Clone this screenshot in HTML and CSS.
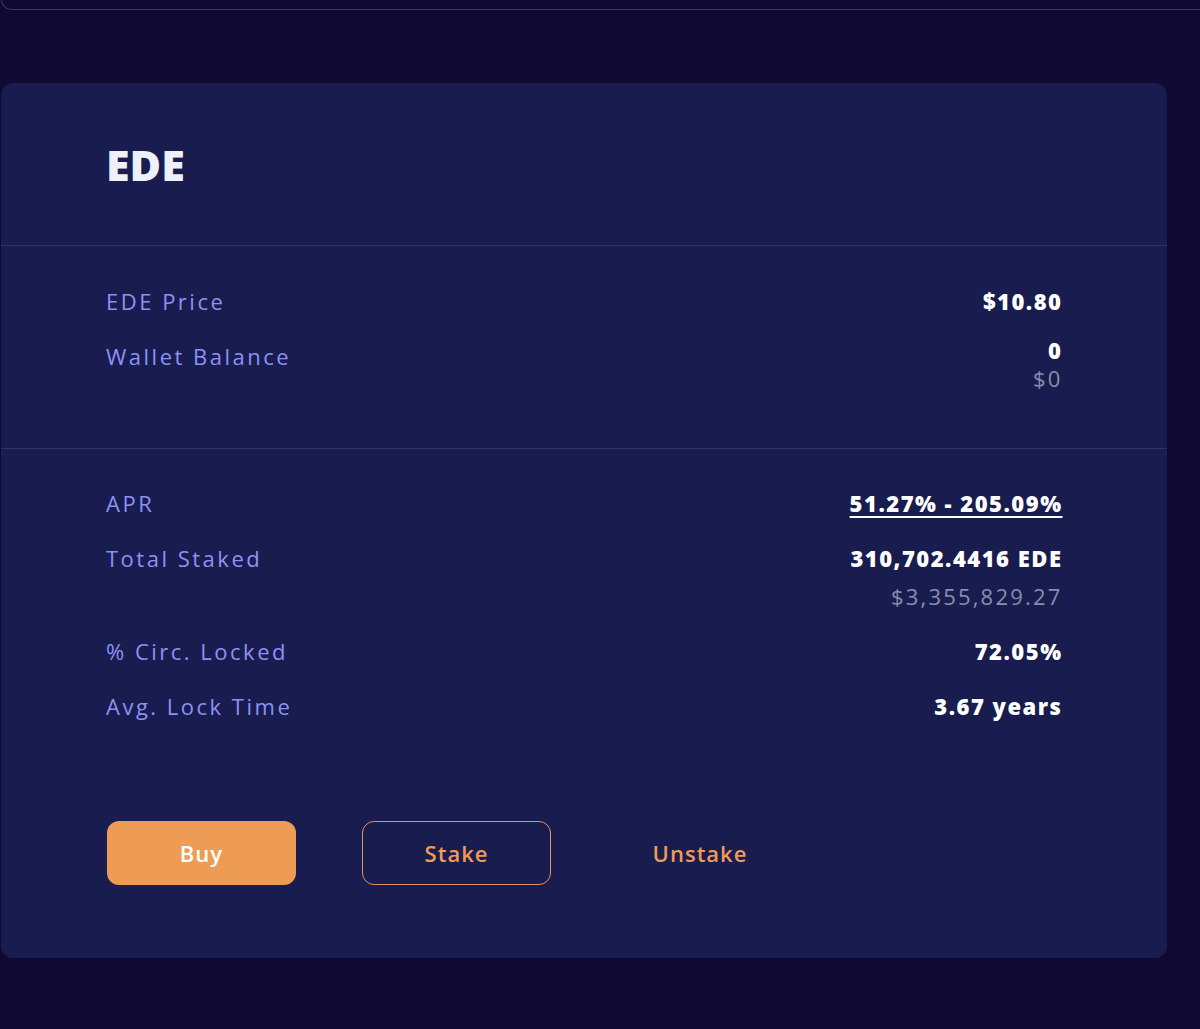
FILE: index.html
```html
<!DOCTYPE html>
<html>
<head>
<meta charset="utf-8">
<link rel="stylesheet" href="styles.css">
</head>
<body>
<div class="prev-card"></div>
<div class="card">
  <div class="card-header">
    <h1 class="title">EDE</h1>
  </div>
  <div class="section section-top">
    <div class="rows">
      <div class="row">
        <div class="label">EDE Price</div>
        <div class="value"><div class="main">$10.80</div></div>
      </div>
      <div class="row">
        <div class="label">Wallet Balance</div>
        <div class="value value-raised"><div class="main">0</div><div class="sub">$0</div></div>
      </div>
    </div>
  </div>
  <div class="section section-bottom">
    <div class="rows">
      <div class="row">
        <div class="label">APR</div>
        <div class="value"><div class="main link">51.27% - 205.09%</div></div>
      </div>
      <div class="row">
        <div class="label">Total Staked</div>
        <div class="value value-spaced"><div class="main">310,702.4416 EDE</div><div class="sub">$3,355,829.27</div></div>
      </div>
      <div class="row">
        <div class="label">% Circ. Locked</div>
        <div class="value"><div class="main">72.05%</div></div>
      </div>
      <div class="row">
        <div class="label">Avg. Lock Time</div>
        <div class="value"><div class="main">3.67 years</div></div>
      </div>
    </div>
    <div class="actions">
      <button class="btn btn-primary">Buy</button>
      <button class="btn btn-outline">Stake</button>
      <button class="btn btn-text">Unstake</button>
    </div>
  </div>
</div>
</body>
</html>
```

FILE: styles.css
```css
* { box-sizing: border-box; }
html, body { margin: 0; padding: 0; }
body {
  background: #100a33;
  font-family: "Open Sans", "Lato", sans-serif;
  width: 1200px;
  height: 1029px;
  overflow: hidden;
}
.prev-card {
  height: 10px;
  margin-left: 1px;
  margin-right: -20px;
  border-left: 1px solid #3b3a7c;
  border-bottom: 1px solid #3b3a7c;
  border-bottom-left-radius: 10px;
}
.card {
  margin-top: 73px;
  margin-left: 1px;
  width: 1166px;
  height: 875px;
  background: #181c4f;
  border-radius: 12px;
}
.card-header {
  height: 163px;
  display: flex;
  align-items: center;
  padding: 0 105px;
  border-bottom: 1px solid #2f336d;
}
.title {
  margin: 0;
  font-size: 43px;
  font-weight: 800;
  color: #eef0fb;
  letter-spacing: 0;
}
.section { padding: 0 106px 0 105px; }
.section-top {
  padding-top: 41px;
  padding-bottom: 56px;
  border-bottom: 1px solid #2f336d;
}
.section-bottom { padding-top: 40px; }
.rows {
  display: flex;
  flex-direction: column;
  gap: 27px;
}
.row {
  display: flex;
  justify-content: space-between;
  align-items: flex-start;
}
.label {
  color: #8d91f4;
  font-size: 22px;
  line-height: 28px;
  letter-spacing: 2.5px;
}
.value {
  text-align: right;
  display: flex;
  flex-direction: column;
  align-items: flex-end;
  margin-right: -1.5px;
}
.value-raised { margin-top: -6px; }
.value-spaced { gap: 10px; }
.main {
  color: #ffffff;
  font-weight: 800;
  font-size: 22px;
  line-height: 28px;
  letter-spacing: 1.5px;
}
.link { text-decoration: underline; text-underline-offset: 4px; text-decoration-thickness: 2px; }
.sub {
  color: #8b8dab;
  font-size: 22px;
  line-height: 28px;
  letter-spacing: 2.2px;
}
.actions {
  display: flex;
  gap: 66px;
  margin-top: 101px;
  margin-left: 1px;
}
.btn {
  height: 64px;
  width: 189px;
  border-radius: 12px;
  font-family: "Open Sans", "Lato", sans-serif;
  font-size: 22px;
  font-weight: 600;
  letter-spacing: 1px;
  border: none;
  background: transparent;
  color: #ee9b55;
  cursor: pointer;
}
.btn-primary {
  background: #ee9b55;
  color: #ffffff;
}
.btn-outline {
  width: 189px;
  border: 1.5px solid #df9560;
}
.btn-text { width: 166px; }
```
